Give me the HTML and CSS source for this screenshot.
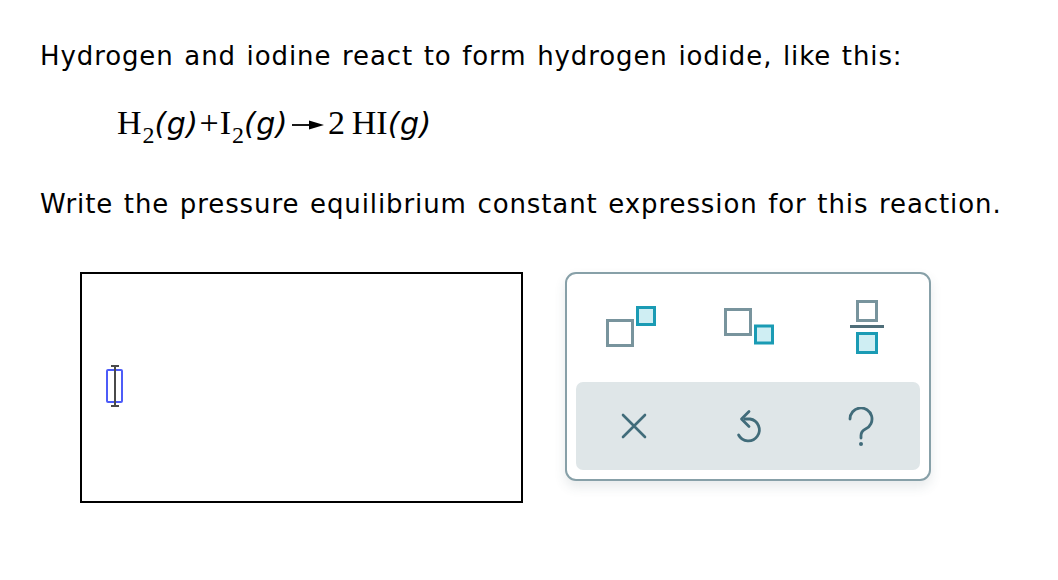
FILE: index.html
```html
<!DOCTYPE html>
<html>
<head>
<meta charset="utf-8">
<link rel="stylesheet" href="styles.css">
</head>
<body>
<div class="page">
  <p class="intro">Hydrogen and iodine react to form hydrogen iodide, like this:</p>
  <div class="equation">
    <span class="rm">H</span><sub class="rm">2</sub><span class="ph">(g)</span><span class="rm op">+</span><span class="rm">I</span><sub class="rm">2</sub><span class="ph">(g)</span><span class="arrow"><svg width="34" height="12" viewBox="0 0 34 12"><line x1="1" y1="6" x2="22" y2="6" stroke="#000" stroke-width="1.8"/><path d="M18 1.5 L33 6 L18 10.5 Z" fill="#000"/></svg></span><span class="rm">2&#8201;HI</span><span class="ph">(g)</span>
  </div>
  <p class="question">Write the pressure equilibrium constant expression for this reaction.</p>

  <div class="work">
    <div class="answer">
      <div class="cursor">
        <span class="beam"></span>
      </div>
    </div>

    <div class="palette">
      <div class="tools">
        <button class="tool" aria-label="superscript">
          <svg width="50" height="41" viewBox="0 0 50 41">
            <rect x="1.5" y="14.5" width="25" height="25" fill="#fff" stroke="#78949d" stroke-width="3"/>
            <rect x="31.5" y="1.5" width="17" height="17" fill="#cfeef3" stroke="#1a9bb4" stroke-width="3"/>
          </svg>
        </button>
        <button class="tool" aria-label="subscript">
          <svg width="50" height="37" viewBox="0 0 50 37">
            <rect x="1.5" y="1.5" width="25" height="25" fill="#fff" stroke="#78949d" stroke-width="3"/>
            <rect x="31.5" y="18" width="17" height="17" fill="#cfeef3" stroke="#1a9bb4" stroke-width="3"/>
          </svg>
        </button>
        <button class="tool frac" aria-label="fraction">
          <svg width="34" height="54" viewBox="0 0 34 54">
            <rect x="7.5" y="1.5" width="19" height="19" fill="#fff" stroke="#78949d" stroke-width="3"/>
            <rect x="0" y="25" width="34" height="3" fill="#4f6e79"/>
            <rect x="7.5" y="33.5" width="19" height="19" fill="#cfeef3" stroke="#1a9bb4" stroke-width="3"/>
          </svg>
        </button>
      </div>
      <div class="actions">
        <button class="action" aria-label="clear">
          <svg width="26" height="26" viewBox="0 0 26 26">
            <path d="M2 2 L24 24 M24 2 L2 24" stroke="#416c7a" stroke-width="2.6" stroke-linecap="round" fill="none"/>
          </svg>
        </button>
        <button class="action undo" aria-label="undo">
          <svg width="30" height="36" viewBox="0 0 30 36">
            <path d="M12 11 L17 11 A11 11 0 1 1 5.6 27" stroke="#416c7a" stroke-width="2.8" stroke-linecap="round" fill="none"/>
            <path d="M16 3.5 L8.5 11 L16 18.5" stroke="#416c7a" stroke-width="2.8" stroke-linecap="round" stroke-linejoin="round" fill="none"/>
          </svg>
        </button>
        <button class="action help" aria-label="help">
          <svg width="26" height="40" viewBox="0 0 26 40">
            <path d="M2 12 A11 11 0 1 1 17.5 22 C14.5 23.5 13 25 13 28.5 L13 31" stroke="#416c7a" stroke-width="2.8" stroke-linecap="round" fill="none"/>
            <circle cx="13" cy="37" r="2" fill="#416c7a"/>
          </svg>
        </button>
      </div>
    </div>
  </div>
</div>
</body>
</html>
```

FILE: styles.css
```css
html, body {
  margin: 0;
  padding: 0;
  background: #fff;
}

.page {
  padding: 42px 0 0 40px;
  font-family: "DejaVu Sans", Verdana, sans-serif;
  color: #000;
}

.intro,
.question {
  margin: 0;
  font-size: 26px;
  line-height: 28px;
  letter-spacing: 0.9px;
  word-spacing: 1.5px;
  white-space: nowrap;
}

.equation {
  margin: 31px 0 0 77px;
  height: 48px;
  font-size: 34px;
  line-height: 36px;
  white-space: nowrap;
}

.equation .rm {
  font-family: "Liberation Serif", "Times New Roman", serif;
}

.equation sub {
  font-size: 24px;
  vertical-align: -9px;
  line-height: 0;
  margin-left: 1px;
}

.equation .ph {
  font-family: "DejaVu Sans", Verdana, sans-serif;
  font-style: italic;
  font-size: 30px;
  letter-spacing: 0.5px;
}

.equation .op {
  margin: 0 1px;
}

.equation .arrow {
  display: inline-block;
  margin: 0 3px 0 3px;
  vertical-align: 3px;
}

.question {
  margin-top: 41px;
}

.work {
  display: flex;
  align-items: flex-start;
  gap: 42px;
  margin: 54px 0 0 40px;
}

.answer {
  box-sizing: border-box;
  width: 443px;
  height: 231px;
  border: 2px solid #000;
  display: flex;
  align-items: center;
  padding: 0 0 3px 24px;
}

.cursor {
  position: relative;
  box-sizing: border-box;
  width: 17px;
  height: 34px;
  border: 2px solid #4d5cf8;
  border-radius: 2px;
}

.beam {
  position: absolute;
  left: 5.5px;
  top: -6px;
  width: 2px;
  height: 42px;
  background: #4a4a4a;
}

.beam::before,
.beam::after {
  content: "";
  position: absolute;
  left: -3px;
  width: 8px;
  height: 2px;
  background: #4a4a4a;
}

.beam::before { top: 0; }
.beam::after { bottom: 0; }

.palette {
  box-sizing: border-box;
  width: 366px;
  height: 209px;
  border: 2px solid #87a0a8;
  border-radius: 11px;
  padding: 9px;
  background: #fff;
  box-shadow: 0 6px 12px rgba(60, 80, 90, 0.12);
  display: flex;
  flex-direction: column;
  gap: 12px;
}

.tools {
  height: 87px;
  display: grid;
  grid-template-columns: 1fr 1fr 1fr;
  align-items: center;
}

.tool,
.action {
  border: 0;
  background: transparent;
  padding: 0;
  margin: 0;
  display: flex;
  align-items: center;
  justify-content: center;
}

.tool svg,
.action svg {
  display: block;
}

.tools .tool:first-child { margin-left: -5px; }
.tools .tool:nth-child(2) { margin-left: 2px; }
.tools .frac { margin-left: 8px; }

.actions {
  height: 88px;
  background: #dfe6e8;
  border-radius: 7px;
  display: grid;
  grid-template-columns: 1fr 1fr 1fr;
  align-items: center;
}

.actions .action:first-child { margin-left: 1px; }
.actions .help { margin-top: 2px; margin-left: -3px; }
```
